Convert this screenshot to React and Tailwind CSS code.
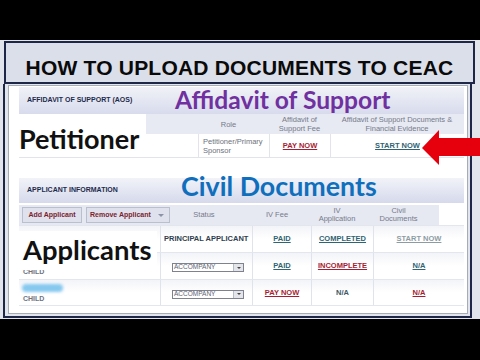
import React from "react";

const sans = "font-['Liberation_Sans',Arial,sans-serif]";
const lato = "font-['Lato',sans-serif]";

function Link({ children, color = "teal", className = "" }) {
  const c =
    color === "red"
      ? "text-[#a51d33]"
      : color === "gray"
      ? "text-[#8d9ca3]"
      : "text-[#2f6473]";
  return (
    <span className={`${c} font-bold text-[7.5px] underline underline-offset-[1px] leading-none whitespace-nowrap ${className}`}>
      {children}
    </span>
  );
}

function Select() {
  return (
    <div className="flex w-[72px] h-[9px] border border-[#7d828e] bg-white items-center">
      <span className="flex-1 pl-[1px] text-[6.5px] leading-none text-[#5d6372]">ACCOMPANY</span>
      <span className="w-[10px] h-full bg-[#e4e5ea] border-l border-[#b7bbc5] flex items-center justify-center">
        <span className="w-0 h-0 border-l-[2px] border-r-[2px] border-t-[2px] border-l-transparent border-r-transparent border-t-[#444]" />
      </span>
    </div>
  );
}

function Row({ first, status, fee, app, civil, last }) {
  return (
    <div className={`flex h-[27px] border-t border-[#e3e6ee] bg-gradient-to-b from-[#f3f4f8] via-white to-white ${last ? "border-b border-b-[#e3e6ee]" : ""}`}>
      <div className="w-[141px] relative">{first}</div>
      <div className="w-[92px] border-l border-[#e0e3eb] flex items-center">{status}</div>
      <div className="w-[59px] border-l border-[#e0e3eb] flex items-center justify-center">{fee}</div>
      <div className="w-[62px] border-l border-[#e0e3eb] flex items-center justify-center">{app}</div>
      <div className="flex-1 border-l border-[#e0e3eb] flex items-center justify-center">{civil}</div>
    </div>
  );
}

export default function App() {
  return (
    <div className={`w-[480px] h-[360px] bg-black relative overflow-hidden ${sans}`}>
      <div className="h-[40px]" />
      <div className="h-[279px] bg-[#e3e5ed] pl-[3px] pt-[1px] flex flex-col">
        {/* Title */}
        <div className="ml-[1px] w-[471px] h-[43px] border-2 border-[#1e2747] bg-[#dbdfea] flex justify-center pt-[14px]">
          <span className="text-[21px] font-bold leading-none text-[#0a0a0a] tracking-[0.2px]">
            HOW TO UPLOAD DOCUMENTS TO CEAC
          </span>
        </div>
        {/* Frame */}
        <div className="w-[469px] h-[234px] border-x-2 border-b-2 border-[#1e2747] pl-[3px] pr-[2px] pt-[1px] pb-[2px]">
          <div className="h-full border border-[#a6abb8] bg-white pl-[10px] pr-[3px] flex flex-col">
            {/* AOS band */}
            <div className="mt-[1px] h-[27px] bg-gradient-to-b from-[#f1f2f8] to-[#d7dbec] flex items-center">
              <span className="w-[156px] pl-[8px] text-[7px] font-bold text-[#1f2b4c] whitespace-nowrap">
                AFFIDAVIT OF SUPPORT (AOS)
              </span>
              <span className={`${lato} font-bold text-[24.6px] leading-none text-[#7030a0] whitespace-nowrap`}>
                Affidavit of Support
              </span>
            </div>
            {/* AOS table */}
            <div className="h-[44px] flex border-b border-[#e2e4ea]">
              <div className="w-[127px] bg-white flex items-center pt-[6px]">
                <span className={`${lato} font-bold text-[27px] leading-none text-[#111]`}>Petitioner</span>
              </div>
              <div className="flex-1 flex flex-col">
                <div className="h-[20px] flex bg-[#e7e9f3] text-[7.5px] leading-[9px] text-[#757b8a] text-center">
                  <div className="w-[52px]" />
                  <div className="w-[71px] flex items-center justify-center pr-[10px]">Role</div>
                  <div className="w-[61px] flex items-center justify-center">
                    Affidavit of<br />Support Fee
                  </div>
                  <div className="flex-1 flex items-center justify-center">
                    Affidavit of Support Documents &amp;<br />Financial Evidence
                  </div>
                </div>
                <div className="flex-1 flex">
                  <div className="w-[52px]" />
                  <div className="w-[71px] border-l border-[#e2e4ea] pl-[4px] flex items-center text-[7.5px] leading-[9px] text-[#6d717c]">
                    Petitioner/Primary<br />Sponsor
                  </div>
                  <div className="w-[61px] border-l border-[#e2e4ea] flex items-center justify-center">
                    <Link color="red">PAY NOW</Link>
                  </div>
                  <div className="flex-1 border-l border-[#e2e4ea] flex items-center justify-center">
                    <Link>START NOW</Link>
                  </div>
                </div>
              </div>
            </div>
            <div className="h-[20px]" />
            {/* Applicant band */}
            <div className="h-[25px] bg-gradient-to-b from-[#f2f3f9] to-[#d5d9eb] flex items-center">
              <span className="w-[162px] pl-[8px] text-[7px] font-bold text-[#1f2b4c] whitespace-nowrap">
                APPLICANT INFORMATION
              </span>
              <span className={`${lato} font-bold text-[26.8px] leading-none text-[#0f6fbd] whitespace-nowrap relative -top-[4px]`}>
                Civil Documents
              </span>
            </div>
            <div className="h-[2px]" />
            {/* Toolbar / header */}
            <div className="h-[20px] flex">
              <div className="w-[420px] flex bg-[#e6e8f2] items-stretch">
                <div className="w-[151px] flex items-center pl-[3px] gap-[4px] py-[2px]">
                  <div className="h-full w-[60px] bg-[#dfe2ec] border border-[#b9bfcf] flex items-center justify-center text-[7px] font-bold text-[#7b1e2f]">
                    Add Applicant
                  </div>
                  <div className="h-full w-[84px] bg-[#dfe2ec] border border-[#b9bfcf] flex items-center pl-[3px] gap-[7px] text-[7px] font-bold text-[#7b1e2f] whitespace-nowrap">
                    Remove Applicant
                    <span className="w-0 h-0 border-l-[3px] border-r-[3px] border-t-[3px] border-l-transparent border-r-transparent border-t-[#8a93a8]" />
                  </div>
                </div>
                <div className="w-[68px] flex items-center justify-center text-[7.5px] text-[#757b8a]">Status</div>
                <div className="w-[78px] flex items-center justify-center text-[7.5px] text-[#757b8a]">IV Fee</div>
                <div className="w-[42px] flex items-center justify-center text-center text-[7.5px] leading-[8.5px] text-[#757b8a] whitespace-nowrap">
                  IV<br />Application
                </div>
                <div className="flex-1 flex items-center justify-center text-center text-[7.5px] leading-[8.5px] text-[#757b8a]">
                  Civil<br />Documents
                </div>
              </div>
            </div>
            {/* Rows */}
            <Row
              status={
                <span className="pl-[3px] text-[7.5px] font-bold text-[#2f3e4e] whitespace-nowrap">PRINCIPAL APPLICANT</span>
              }
              fee={<Link>PAID</Link>}
              app={<Link>COMPLETED</Link>}
              civil={<Link color="gray">START NOW</Link>}
            />
            <Row
              first={
                <span className="absolute left-[4px] top-[14px] text-[7px] font-bold text-[#6e7480]">CHILD</span>
              }
              status={<div className="pl-[11px] pt-[3px]"><Select /></div>}
              fee={<Link>PAID</Link>}
              app={<Link color="red">INCOMPLETE</Link>}
              civil={<Link>N/A</Link>}
            />
            <Row
              last
              first={
                <>
                  <span className="absolute left-[3px] top-[4px] w-[41px] h-[8px] rounded-full bg-[#86c8ef] blur-[1.5px]" />
                  <span className="absolute left-[4px] top-[14px] text-[7px] font-bold text-[#6e7480]">CHILD</span>
                </>
              }
              status={<div className="pl-[11px] pt-[3px]"><Select /></div>}
              fee={<Link color="red">PAY NOW</Link>}
              app={<span className="text-[7.5px] font-bold text-[#3e5a66] leading-none">N/A</span>}
              civil={<Link color="red">N/A</Link>}
            />
          </div>
        </div>
      </div>

      {/* Applicants overlay label */}
      <div className="absolute left-[19px] top-[231px] w-[138px] h-[39px] bg-white flex items-center pl-[4px] pb-[1px]">
        <span className={`${lato} font-bold text-[27.4px] leading-none text-[#111]`}>Applicants</span>
      </div>

      {/* Red arrow */}
      <svg className="absolute left-[420px] top-[129px]" width="60" height="36" viewBox="0 0 60 36">
        <polygon points="2,19 19,1 19,9 60,9 60,27 19,27 19,36" fill="#e6000d" />
      </svg>
    </div>
  );
}
